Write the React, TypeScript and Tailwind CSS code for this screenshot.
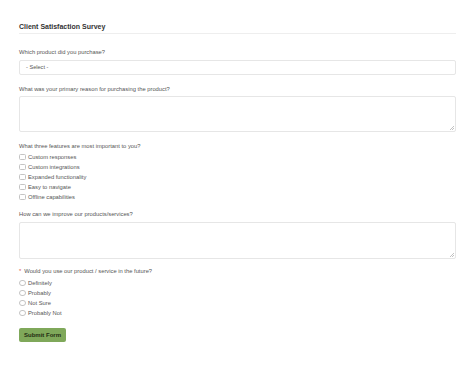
const features = [
  "Custom responses",
  "Custom integrations",
  "Expanded functionality",
  "Easy to navigate",
  "Offline capabilities",
];

const answers = ["Definitely", "Probably", "Not Sure", "Probably Not"];

const Label = ({ children, className = "" }: { children: React.ReactNode; className?: string }) => (
  <div className={`h-[8px] leading-[8px] text-[5.8px] text-[#555] ${className}`}>{children}</div>
);

const TextBox = ({ className = "" }: { className?: string }) => (
  <div className={`relative w-full rounded-[2px] border border-[#e6e6e6] bg-white ${className}`}>
    <svg className="absolute right-[1px] bottom-[1px]" width="5" height="5" viewBox="0 0 5 5">
      <path d="M1 5 L5 1 M3 5 L5 3" stroke="#9a9a9a" strokeWidth="0.6" />
    </svg>
  </div>
);

export default function App() {
  return (
    <div className="w-[474px] h-[365px] bg-white pt-[20px] pl-[19px] pr-[18px] font-['Liberation_Sans',Arial,sans-serif]">
      <div className="h-[14px] leading-[13px] border-b border-[#eeeeee] text-[7px] font-bold text-[#333]">
        Client Satisfaction Survey
      </div>

      <Label className="mt-[14px]">Which product did you purchase?</Label>
      <div className="mt-[4px] h-[15px] w-full rounded-[2px] border border-[#e6e6e6] bg-white flex items-center pl-[6px] text-[5.6px] text-[#555]">
        - Select -
      </div>

      <Label className="mt-[10px]">What was your primary reason for purchasing the product?</Label>
      <TextBox className="mt-[3px] h-[36px]" />

      <Label className="mt-[10px]">What three features are most important to you?</Label>
      <div className="mt-[2px] flex flex-col">
        {features.map((f) => (
          <div key={f} className="h-[10px] flex items-center">
            <span className="w-[6.5px] h-[6.5px] rounded-[1.5px] border border-[#c4c4c4] bg-white" />
            <span className="ml-[2.5px] text-[5.8px] text-[#555] leading-[8px]">{f}</span>
          </div>
        ))}
      </div>

      <Label className="mt-[8px]">How can we improve our products/services?</Label>
      <TextBox className="mt-[4px] h-[37px]" />

      <Label className="mt-[8px]">
        <span className="text-[#d9534f] mr-[3px]">*</span>Would you use our product / service in the future?
      </Label>
      <div className="mt-[3px] flex flex-col">
        {answers.map((a) => (
          <div key={a} className="h-[10px] flex items-center">
            <span className="w-[6.5px] h-[6.5px] rounded-full border border-[#c4c4c4] bg-white" />
            <span className="ml-[2.5px] text-[5.8px] text-[#555] leading-[8px]">{a}</span>
          </div>
        ))}
      </div>

      <button className="mt-[10px] h-[14px] w-[47px] rounded-[2px] bg-[#7fa85a] text-[6px] font-bold text-[#1f2d12] flex items-center justify-center">
        Submit Form
      </button>
    </div>
  );
}
